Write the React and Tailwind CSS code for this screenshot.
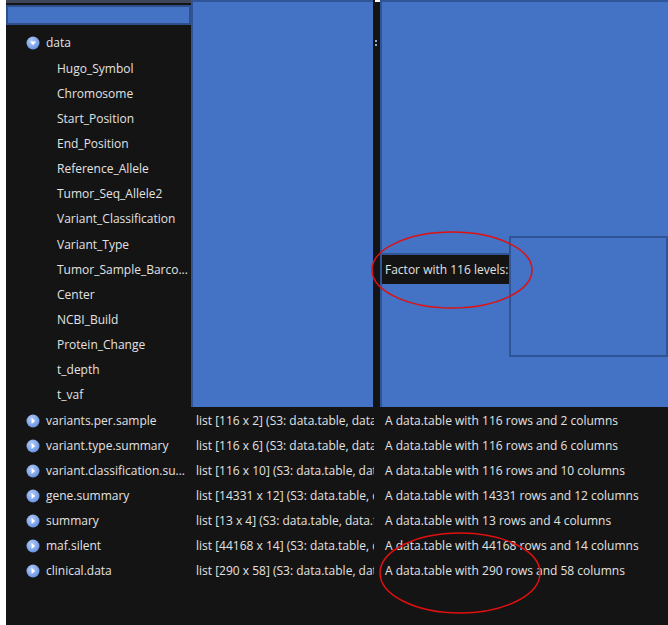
import React from 'react';

const fields = [
  'Hugo_Symbol',
  'Chromosome',
  'Start_Position',
  'End_Position',
  'Reference_Allele',
  'Tumor_Seq_Allele2',
  'Variant_Classification',
  'Variant_Type',
  'Tumor_Sample_Barco...',
  'Center',
  'NCBI_Build',
  'Protein_Change',
  't_depth',
  't_vaf',
];

const objects = [
  ['variants.per.sample', 'list [116 x 2] (S3: data.table, data.frame)', 'A data.table with 116 rows and 2 columns'],
  ['variant.type.summary', 'list [116 x 6] (S3: data.table, data.frame)', 'A data.table with 116 rows and 6 columns'],
  ['variant.classification.su...', 'list [116 x 10] (S3: data.table, data.frame)', 'A data.table with 116 rows and 10 columns'],
  ['gene.summary', 'list [14331 x 12] (S3: data.table, data.frame)', 'A data.table with 14331 rows and 12 columns'],
  ['summary', 'list [13 x 4] (S3: data.table, data.frame)', 'A data.table with 13 rows and 4 columns'],
  ['maf.silent', 'list [44168 x 14] (S3: data.table, data.frame)', 'A data.table with 44168 rows and 14 columns'],
  ['clinical.data', 'list [290 x 58] (S3: data.table, data.frame)', 'A data.table with 290 rows and 58 columns'],
];

function Toggle({ open }) {
  return (
    <svg width="14" height="14" viewBox="0 0 14 14" className="shrink-0">
      <defs>
        <radialGradient id={open ? 'tgo' : 'tgc'} cx="40%" cy="35%" r="70%">
          <stop offset="0%" stopColor="#b4ccf7" />
          <stop offset="100%" stopColor="#6390e2" />
        </radialGradient>
      </defs>
      <circle cx="7" cy="7" r="6.5" fill={`url(#${open ? 'tgo' : 'tgc'})`} />
      {open ? (
        <path d="M4 5.6 L10 5.6 L7 9.2 Z" fill="#ffffff" />
      ) : (
        <path d="M5.6 4 L9.2 7 L5.6 10 Z" fill="#ffffff" />
      )}
    </svg>
  );
}

export default function App() {
  return (
    <div
      className="relative flex w-[668px] h-[625px] bg-white overflow-hidden text-[12px] text-[#e2e2e2]"
      style={{ fontFamily: '"Open Sans", "Noto Sans", sans-serif' }}
    >
      <div className="w-[6px] shrink-0 bg-white" />
      <div className="flex-1 flex flex-col bg-[#141414]">
        {/* upper part, partly covered by blue boxes */}
        <div className="flex h-[407px]">
          <div className="w-[185px] shrink-0 flex flex-col">
            <div className="h-[3px] bg-[#3d4759]" />
            <div className="h-[2px]" />
            <div className="h-[20px] bg-[#4472c4] border-2 border-[#2f4f8a]" />
            <div className="h-[5px]" />
            <div className="h-[25.14px] flex items-center gap-[6px] pl-[20px]">
              <Toggle open />
              <span>data</span>
            </div>
            {fields.map((f) => (
              <div key={f} className="h-[25.14px] flex items-center pl-[51px] pt-[2px] whitespace-nowrap">
                {f}
              </div>
            ))}
          </div>
          <div className="w-[182px] shrink-0 bg-[#4472c4] border-l-2 border-t-2 border-[#2f5597]" />
          <div className="w-[7px] shrink-0 flex flex-col">
            <div className="h-[2px] w-[5px] ml-[2px] bg-white" />
            <div className="mt-[38px] ml-[2px] w-[2px] h-[2px] bg-[#8fa8e0]" />
            <div className="mt-[2px] ml-[2px] w-[2px] h-[2px] bg-[#8fa8e0]" />
          </div>
          <div className="flex-1 bg-[#4472c4] border-l-2 border-t-2 border-[#2f5597] flex flex-col">
            <div className="h-[234px]" />
            <div className="flex">
              <div className="w-[127px] flex flex-col">
                <div className="h-[17px]" />
                <div className="h-[31px] bg-[#141414] border-t-2 border-[#2f5597] flex items-center pl-[3px] whitespace-nowrap">
                  Factor with 116 levels:
                </div>
              </div>
              <div className="flex-1 h-[121px] border-2 border-[#2f5597]" />
            </div>
          </div>
        </div>
        {/* lower part */}
        <div className="flex flex-col pt-[1px]">
          {objects.map(([name, val, desc]) => (
            <div key={name} className="h-[25.14px] flex items-center">
              <div className="w-[185px] shrink-0 flex items-center gap-[6px] pl-[20px] whitespace-nowrap overflow-hidden">
                <Toggle />
                <span>{name}</span>
              </div>
              <div className="w-[183px] shrink-0 pl-[5px] whitespace-nowrap overflow-hidden">{val}</div>
              <div className="flex-1 pl-[11px] whitespace-nowrap overflow-hidden">{desc}</div>
            </div>
          ))}
        </div>
      </div>
      {/* red annotation ellipses */}
      <svg className="absolute left-0 top-0 pointer-events-none" width="668" height="625">
        <ellipse cx="452" cy="270" rx="80" ry="38" fill="none" stroke="#e01010" strokeWidth="1.5" />
        <ellipse cx="460" cy="573" rx="80" ry="40" fill="none" stroke="#e01010" strokeWidth="1.5" />
      </svg>
    </div>
  );
}
